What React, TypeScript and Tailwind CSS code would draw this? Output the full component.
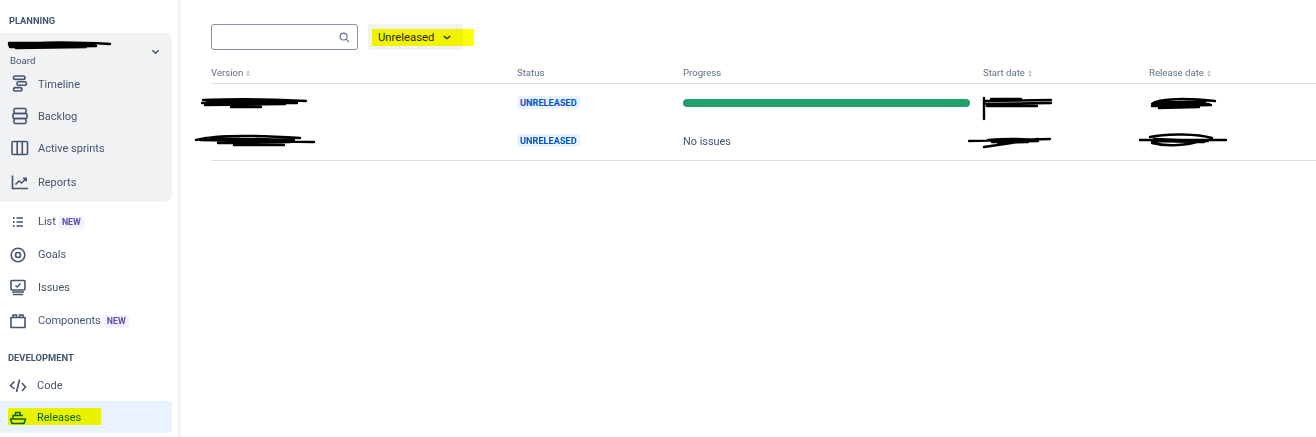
import React from "react";

const ic = "w-[18px] h-[18px] text-[#44546f] shrink-0";
const sw = { fill: "none", stroke: "currentColor", strokeWidth: 1.6 } as const;

const Timeline = () => (
  <svg viewBox="0 0 18 18" className={ic} {...sw}>
    <rect x="2.5" y="1" width="11.5" height="3.4" rx="1.7" />
    <rect x="6" y="6.8" width="9.5" height="3.4" rx="1.7" />
    <rect x="2.5" y="12.6" width="8.5" height="3.4" rx="1.7" />
  </svg>
);
const Backlog = () => (
  <svg viewBox="0 0 18 18" className={ic} {...sw}>
    <rect x="3" y="1.5" width="12" height="5" rx="1.5" />
    <rect x="2" y="6.5" width="14" height="5" rx="1" />
    <rect x="3" y="11.5" width="12" height="5" rx="1.5" />
  </svg>
);
const Sprints = () => (
  <svg viewBox="0 0 18 18" className={ic} {...sw}>
    <rect x="1" y="2.5" width="15.5" height="13" rx="1.5" />
    <path d="M6.2 2.5 V15.5 M11.3 2.5 V15.5" />
  </svg>
);
const Reports = () => (
  <svg viewBox="0 0 18 18" className={ic} {...sw}>
    <path d="M1.5 2.5 V15.5 H17" />
    <path d="M4.5 11.5 L8 8 L10.5 10 L15 5.5 M12 5.3 H15.2 V8.2" />
  </svg>
);
const ListI = () => (
  <svg viewBox="0 0 18 18" className={ic} {...sw}>
    <path d="M7.5 5 H14 M7.5 9 H14 M7.5 13 H14" />
    <path d="M4 5 H5.5 M4 9 H5.5 M4 13 H5.5" strokeWidth="1.9" />
  </svg>
);
const Goals = () => (
  <svg viewBox="0 0 18 18" className={ic} {...sw}>
    <circle cx="9" cy="9" r="6.8" />
    <circle cx="9" cy="9" r="2.5" />
  </svg>
);
const Issues = () => (
  <svg viewBox="0 0 18 18" className={ic} {...sw}>
    <rect x="2" y="1.5" width="14" height="9.5" rx="1" />
    <path d="M6.5 6.5 L8.3 8 L11.5 4.5" strokeWidth="1.4" />
    <path d="M3 13 H15 M4 15.5 H14" />
  </svg>
);
const ComponentsI = () => (
  <svg viewBox="0 0 18 18" className={ic} {...sw}>
    <path d="M2 5.5 H16 V15.5 H2 Z" strokeLinejoin="round" />
    <path d="M4 5.5 V3 H7.5 V5.5 M10.5 5.5 V3 H14 V5.5" />
  </svg>
);
const Code = () => (
  <svg viewBox="0 0 18 18" className={ic} {...sw}>
    <path d="M5.5 4.5 L1.5 8.5 L5.5 12" />
    <path d="M7.5 15 L10.5 2.5" />
    <path d="M13 6 L16.5 10 L13 14" />
  </svg>
);
const Ship = () => (
  <svg viewBox="0 0 18 18" className="w-[18px] h-[18px] text-[#0c66e4] shrink-0" {...sw}>
    <path d="M1.5 11 H16.5 L15 15.5 H3 Z" strokeLinejoin="round" />
    <path d="M4 11 V7.5 H14 M6.5 7.5 V4.5 H11 V7.5" />
  </svg>
);

const New = () => (
  <span className="ml-[3px] mt-[2px] px-[3px] h-[13px] flex items-center rounded-[2px] bg-[#f3f0ff] text-[#5e4db2] text-[8.8px] font-bold leading-none">
    NEW
  </span>
);

const Scribble = ({ w, h, d, className }: { w: number; h: number; d: string; className: string }) => (
  <svg
    width={w}
    height={h}
    viewBox={`0 0 ${w} ${h}`}
    className={`absolute ${className}`}
    fill="none"
    stroke="#000"
    strokeWidth="2.4"
    strokeLinecap="round"
  >
    <path d={d} />
  </svg>
);

const Sort = () => (
  <svg viewBox="0 0 6 9" className="w-[4px] h-[7px] ml-[3px] text-[#a5adba]" fill="currentColor">
    <path d="M3 0 L5.5 3.2 H.5 Z M3 9 L.5 5.8 H5.5 Z" />
  </svg>
);

function Item({ icon, label, tag, cls = "", gap = "mr-[11px]" }: { icon: React.ReactNode; label: string; tag?: boolean; cls?: string; gap?: string }) {
  return (
    <div className={`flex items-center text-[#44546f] text-[11px] ${cls}`}>
      <div className={`w-[18px] flex justify-center ${gap}`}>{icon}</div>
      <span className="pt-[2px]">{label}</span>
      {tag && <New />}
    </div>
  );
}

const Badge = () => (
  <span className="inline-flex items-center h-[13px] px-[3px] rounded-[3px] bg-[#e9f2ff] text-[#0055cc] text-[9.2px] font-bold leading-none">
    UNRELEASED
  </span>
);

const cols = "grid grid-cols-[306px_166px_300px_166px_1fr]";

export default function App() {
  return (
    <div className="flex w-[1316px] h-[437px] overflow-hidden bg-white font-['Roboto','Liberation_Sans',sans-serif]">
      <aside className="relative w-[181px] h-full border-r-[3px] border-[#f1f2f4] pr-[6px] shrink-0 bg-white">
        <div className="pl-[9px] pt-[14px] h-[33px] text-[9.3px] font-bold text-[#44546f] leading-[13px]">PLANNING</div>
        <div className="relative h-[169px] rounded-r-[8px] bg-[#f1f2f4] pl-[11px]">
          <div className="pt-[22px] h-[35px] text-[9.7px] text-[#44546f] leading-[12px] -ml-[1px]">Board</div>
          <Scribble
            className="left-[6px] top-[6px]"
            w={106}
            h={12}
            d="M3 6 C30 3 70 3 104 5 M4 8 L90 7 M3 4 L60 4 M10 9 L80 8 M6 6 L88 6"
          />
          <svg viewBox="0 0 10 6" className="absolute left-[151px] top-[16px] w-[9px] h-[6px] text-[#44546f]" fill="none" stroke="currentColor" strokeWidth="1.6">
            <path d="M1.5 1 L5 4.5 L8.5 1" />
          </svg>
          <div className="flex flex-col">
            <Item icon={<Timeline />} label="Timeline" cls="h-[32px]" gap="mr-[9px]" />
            <Item icon={<Backlog />} label="Backlog" cls="h-[32px]" gap="mr-[9px]" />
            <Item icon={<Sprints />} label="Active sprints" cls="h-[32px]" gap="mr-[9px]" />
            <Item icon={<Reports />} label="Reports" cls="h-[36px]" gap="mr-[9px]" />
          </div>
        </div>
        <div className="flex flex-col pl-[9px] pt-[3px]">
          <Item icon={<ListI />} label="List" tag cls="h-[33px]" />
          <Item icon={<Goals />} label="Goals" cls="h-[33px]" />
          <Item icon={<Issues />} label="Issues" cls="h-[33px]" />
          <Item icon={<ComponentsI />} label="Components" tag cls="h-[33px]" />
        </div>
        <div className="pl-[8px] pt-[14px] h-[34px] text-[9.4px] font-bold text-[#44546f] leading-[13px]">DEVELOPMENT</div>
        <div className="pl-[9px]">
          <Item icon={<Code />} label="Code" cls="h-[29px]" gap="mr-[10px]" />
        </div>
        <div className="relative h-[32px] mt-[1px] rounded-r-[4px] bg-[#e9f2ff] pl-[9px] flex items-center">
          <Item icon={<Ship />} label="Releases" cls="h-[32px] !text-[#0c66e4]" gap="mr-[10px]" />
          <div className="absolute left-[8px] top-[7px] w-[93px] h-[17px] bg-[#ffff00] mix-blend-multiply" />
        </div>
      </aside>

      <main className="flex-1 pl-[30px] pt-[24px] min-w-0">
        <div className="flex items-center gap-[10px]">
          <div className="relative w-[147px] h-[26px] rounded-[3px] border border-[#8590a2] bg-white flex items-center justify-end pr-[7px]">
            <svg viewBox="0 0 12 12" className="w-[11px] h-[11px] text-[#626f86]" fill="none" stroke="currentColor" strokeWidth="1.2">
              <circle cx="5" cy="5" r="3.8" />
              <path d="M8 8 L11 11" />
            </svg>
          </div>
          <div className="relative w-[95px] h-[26px] rounded-[3px] bg-[#f1f2f4] pl-[10px] flex items-center text-[#172b4d] text-[11.3px]">
            <span className="pt-[2px]">Unreleased</span>
            <svg viewBox="0 0 10 6" className="ml-[9px] w-[8px] h-[5px]" fill="none" stroke="#172b4d" strokeWidth="1.7">
              <path d="M1 1 L5 4.5 L9 1" />
            </svg>
            <div className="absolute left-[4px] top-[5px] w-[102px] h-[17px] bg-[#ffff00] mix-blend-multiply" />
          </div>
        </div>

        <div className={`${cols} mt-[13px] pt-[1px] h-[21px] border-b border-[#dcdfe4] items-start text-[9.6px] text-[#626f86] leading-[18px]`}>
          <div className="flex items-center">Version<Sort /></div>
          <div>Status</div>
          <div>Progress</div>
          <div className="flex items-center">Start date<Sort /></div>
          <div className="flex items-center">Release date<Sort /></div>
        </div>

        <div className={`${cols} relative h-[38px] items-center text-[10.9px] text-[#172b4d]`}>
          <div />
          <div><Badge /></div>
          <div className="pr-[13px]"><div className="h-[8px] rounded-full bg-[#22a06b]" /></div>
          <div />
          <div />
          <Scribble
            className="-left-[10px] top-[13px]"
            w={110}
            h={14}
            d="M2 3 C30 2 70 2 105 4 M1 6 L96 6 M4 8 L84 7 M30 10 L60 10 M6 5 L90 4"
          />
          <Scribble
            className="left-[770px] top-[11px]"
            w={74}
            h={26}
            d="M3 3 V24 M4 6 L70 5 M4 9 L70 8 M6 11 L56 11 M10 4 L40 4"
          />
          <Scribble
            className="left-[938px] top-[12px]"
            w={70}
            h={16}
            d="M3 8 C10 2 40 2 66 5 M3 10 L62 9 M10 12 L50 11 M6 6 L56 6 M4 8 L60 8"
          />
        </div>

        <div className={`${cols} relative h-[39px] border-b border-[#dcdfe4] items-center text-[10.9px] text-[#44546f]`}>
          <div />
          <div><Badge /></div>
          <div className="pt-[2px]">No issues</div>
          <div />
          <div />
          <Scribble
            className="-left-[17px] top-[10px]"
            w={124}
            h={18}
            d="M2 8 C20 3 60 3 106 6 M6 8 L120 10 M24 11 L96 10 M40 13 L90 13 M16 6 L100 8 M12 8 L100 9"
          />
          <Scribble
            className="left-[757px] top-[10px]"
            w={84}
            h={18}
            d="M1 9 L82 7 M20 8 C40 6 60 7 66 8 M16 15 L70 7 M30 11 L60 10 M24 10 L70 9"
          />
          <Scribble
            className="left-[927px] top-[9px]"
            w={92}
            h={18}
            d="M2 9 L88 9 M12 6 C30 2 60 3 74 7 M14 12 C30 16 50 14 62 10 M16 8 L70 10 M14 10 L66 11"
          />
        </div>
      </main>
    </div>
  );
}
